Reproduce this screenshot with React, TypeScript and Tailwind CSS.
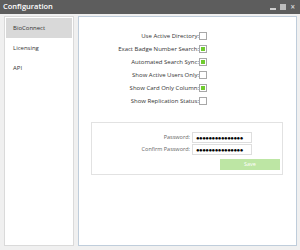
import { useState } from 'react'

export default function App() {
  const [active, setActive] = useState('BioConnect')
  const navItems = ['BioConnect', 'Licensing', 'API']

  const options = [
    { label: 'Use Active Directory:', checked: false },
    { label: 'Exact Badge Number Search:', checked: true },
    { label: 'Automated Search Sync:', checked: true },
    { label: 'Show Active Users Only:', checked: false },
    { label: 'Show Card Only Column:', checked: true },
    { label: 'Show Replication Status:', checked: false },
  ]

  return (
    <div className="w-[300px] h-[250px] bg-[#f0f0f0] flex flex-col overflow-hidden" style={{ fontFamily: '"Open Sans", "Noto Sans", sans-serif' }}>
      {/* title bar */}
      <div className="h-[14px] bg-[#5d5d5d] flex items-center justify-between pl-[3px] pr-[5px] shrink-0">
        <span className="text-white text-[7.5px] font-semibold leading-none">Configuration</span>
        <div className="flex items-center gap-[4px] text-[#d0d0d0]">
          <span className="w-[6px] h-[2px] bg-[#cfcfcf] mt-[4px]" />
          <span className="w-[6px] h-[6px] bg-[#bdbdbd]" />
          <span className="text-[8px] leading-none font-bold">×</span>
        </div>
      </div>

      <div className="flex flex-1 pt-[2px] pl-[4px] pr-[3px] pb-[4px] gap-[4px]">
        {/* side nav */}
        <div className="w-[70px] bg-white border border-[#dadada] p-px flex flex-col">
          {navItems.map((item) => (
            <button
              key={item}
              onClick={() => setActive(item)}
              className={`h-[20px] text-left pl-[7px] text-[6px] text-[#333] ${active === item ? 'bg-[#d9d9d9]' : ''}`}
            >
              {item}
            </button>
          ))}
        </div>

        {/* content */}
        <div className="flex-1 bg-white border border-[#bfcddb] flex flex-col">
          <div className="flex flex-col gap-[5px] pt-[15px] pr-[89px]">
            {options.map((o) => (
              <div key={o.label} className="flex items-center justify-end h-[8px]">
                <span className="text-[6px] text-[#333] leading-none">{o.label}</span>
                <span className="w-[8px] h-[8px] border border-[#a8a8a8] bg-white flex items-center justify-center">
                  {o.checked && <span className="w-[4px] h-[4px] bg-[#6fcb2f]" />}
                </span>
              </div>
            ))}
          </div>

          <div className="mt-[17px] ml-[12px] mr-[13px] border border-[#e2e2e2] pt-[9px] pb-[4px] pr-[2px] flex flex-col">
            {['Password:', 'Confirm Password:'].map((l) => (
              <div key={l} className="flex items-center justify-end pr-[28px] mb-px">
                <span className="text-[5.5px] text-[#666] mr-[2px]">{l}</span>
                <div className="w-[60px] h-[11px] border border-[#dedede] flex items-center pl-[3px] overflow-hidden">
                  <span className="text-[6px] leading-none text-black tracking-[-0.5px]">●●●●●●●●●●●●●●●</span>
                </div>
              </div>
            ))}
            <div className="flex justify-end mt-[3px]">
              <button className="w-[60px] h-[11px] bg-[#bde6a4] text-white text-[5.5px] leading-none">Save</button>
            </div>
          </div>
        </div>
      </div>
    </div>
  )
}
